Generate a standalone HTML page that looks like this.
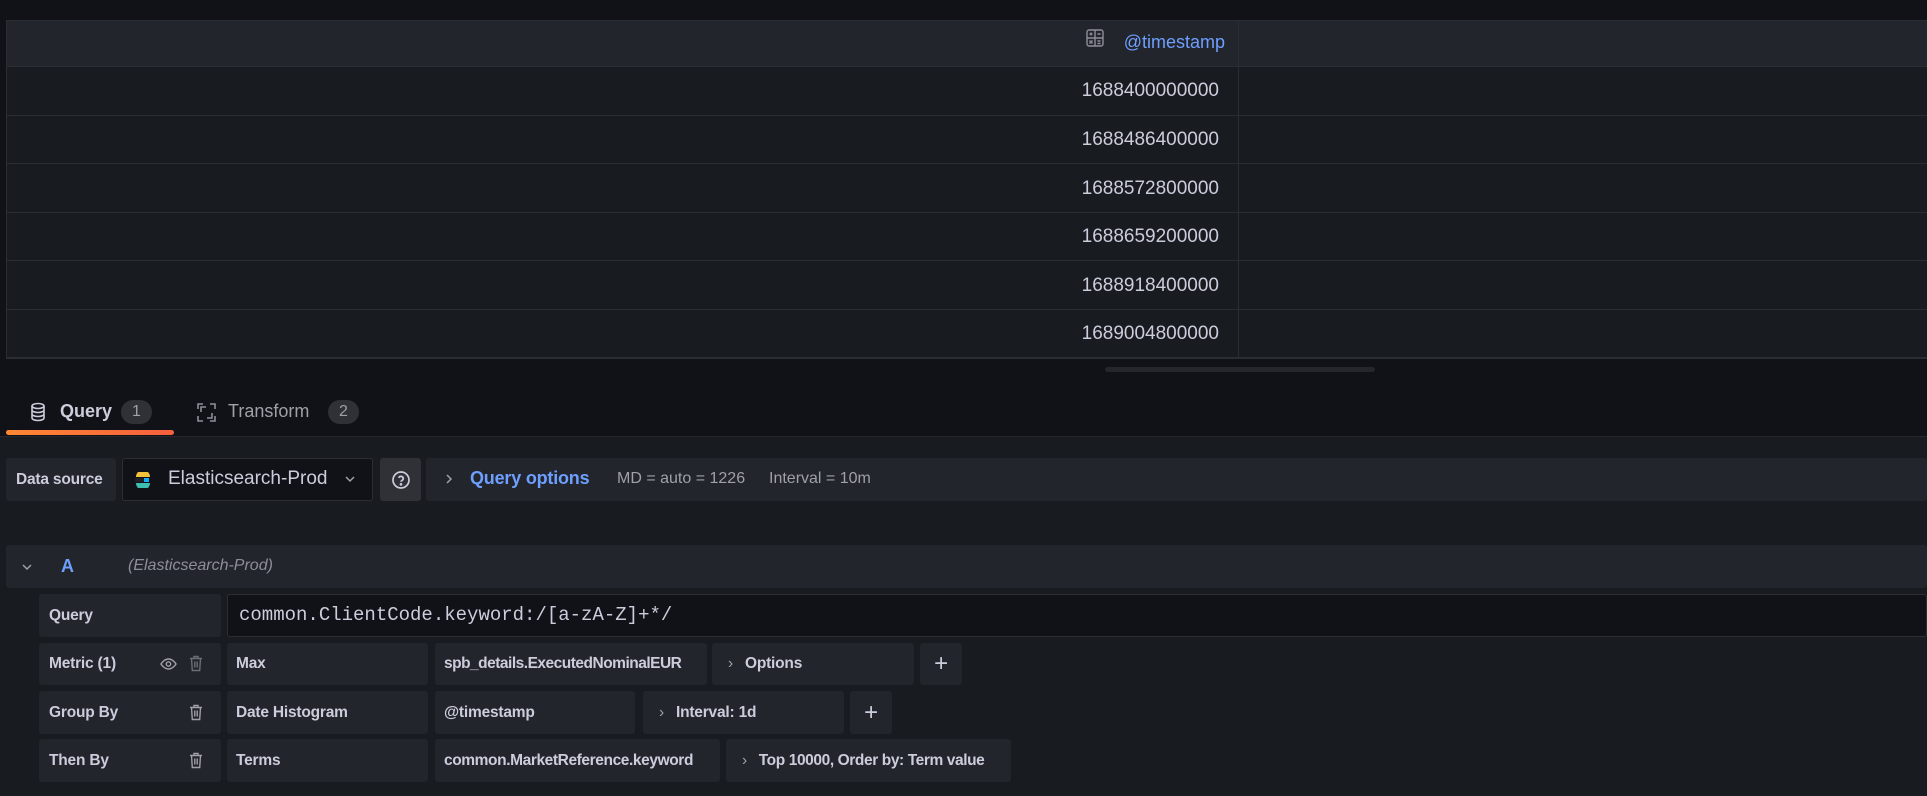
<!DOCTYPE html>
<html><head><meta charset="utf-8"><style>
*{margin:0;padding:0;box-sizing:border-box}
body{width:1927px;height:796px;background:#111217;font-family:"Liberation Sans",sans-serif;color:#ccccdc;position:relative;overflow:hidden}
.a{position:absolute}
.num{position:absolute;right:708px;font-size:19px;color:#ccccdc}
.hl{position:absolute;left:6px;width:1921px;height:1px;background:#2a2d33}
.box{position:absolute;background:#22252b;border-radius:3px;display:flex;align-items:center;padding-left:9px;font-size:15.5px;font-weight:bold;color:#ccccdc;letter-spacing:-0.2px;white-space:nowrap}
.lbl{padding-left:10px}
svg{display:block}
</style></head><body>
<!-- table -->
<div class="a" style="left:6px;top:20px;width:1921px;height:338px;background:#181b1f;border-left:1px solid #2a2d33;border-top:1px solid #2a2d33"></div>
<div class="a" style="left:7px;top:21px;width:1920px;height:45px;background:#22252b"></div>
<div class="a" style="left:1238px;top:21px;width:1px;height:337px;background:#2a2d33"></div>
<div class="a" style="left:1086px;top:29px"><svg width="18" height="18" viewBox="0 0 18 18" fill="none" stroke="#8e8e9a" stroke-width="1.4"><rect x="1" y="1" width="16" height="16" rx="2"/><path d="M9 1v16M1 9h16M3.5 5h3M5 3.5v3M11.5 5h3M3.5 11.5l3 3M6.5 11.5l-3 3M11.5 12h3M11.5 14.5h3"/></svg></div>
<div class="a" style="left:1116px;top:32px;font-size:18px;color:#6e9fff;width:109px;text-align:right;white-space:nowrap">@timestamp</div>
<div class="hl" style="top:66px"></div>
<div class="num" style="top:80px">1688400000000</div>
<div class="hl" style="top:115px"></div>
<div class="num" style="top:129px">1688486400000</div>
<div class="hl" style="top:163px"></div>
<div class="num" style="top:178px">1688572800000</div>
<div class="hl" style="top:212px"></div>
<div class="num" style="top:226px">1688659200000</div>
<div class="hl" style="top:260px"></div>
<div class="num" style="top:275px">1688918400000</div>
<div class="hl" style="top:309px"></div>
<div class="num" style="top:323px">1689004800000</div>
<div class="hl" style="top:357px;height:2px"></div>
<div class="a" style="left:1105px;top:367px;width:270px;height:5px;border-radius:3px;background:#24262c"></div>

<!-- tabs -->
<div class="a" style="left:30px;top:402px"><svg width="16" height="20" viewBox="0 0 16 20" fill="none" stroke="#ccccdc" stroke-width="1.6"><ellipse cx="8" cy="4" rx="6" ry="2.5"/><path d="M2 4v12c0 1.4 2.7 2.5 6 2.5s6-1.1 6-2.5V4M2 8c0 1.4 2.7 2.5 6 2.5s6-1.1 6-2.5M2 12c0 1.4 2.7 2.5 6 2.5s6-1.1 6-2.5"/></svg></div>
<div class="a" style="left:60px;top:401px;font-size:18px;font-weight:bold;color:#ccccdc">Query</div>
<div class="a" style="left:121px;top:400px;width:31px;height:24px;border-radius:12px;background:#2f3137;color:#9fa0a8;font-size:16px;text-align:center;line-height:24px">1</div>
<div class="a" style="left:197px;top:403px"><svg width="19" height="19" viewBox="0 0 19 19" fill="none" stroke="#8e8e9a" stroke-width="1.6"><path d="M1 6V1h5M13 1h5v5M18 13v5h-5M6 18H1v-5M4 9V4h5M15 10v5h-5"/></svg></div>
<div class="a" style="left:228px;top:401px;font-size:18px;color:#9fa0a8">Transform</div>
<div class="a" style="left:328px;top:400px;width:31px;height:24px;border-radius:12px;background:#2f3137;color:#9fa0a8;font-size:16px;text-align:center;line-height:24px">2</div>
<div class="a" style="left:6px;top:430px;width:168px;height:5px;border-radius:3px;background:linear-gradient(90deg,#ff8833,#f55f3e)"></div>
<div class="a" style="left:0;top:436px;width:1927px;height:360px;background:#181b1f;border-top:1px solid #25272d"></div>

<!-- data source row -->
<div class="box" style="left:6px;top:458px;width:110px;height:43px;padding-left:10px">Data source</div>
<div class="a" style="left:122px;top:458px;width:251px;height:43px;background:#111217;border:1px solid #2c2e34;border-radius:3px"></div>
<div class="a" style="left:135px;top:472px"><svg width="16" height="16" viewBox="0 0 16 16"><path d="M1 5a7 7 0 0 1 14 0z" fill="#f3c13a"/><rect x="0" y="6" width="11" height="4" fill="#1e2126"/><rect x="9" y="6" width="5" height="4" fill="#1ba9f5"/><path d="M1 11h14a7 7 0 0 1-14 0z" fill="#3ebeb0"/></svg></div>
<div class="a" style="left:168px;top:468px;font-size:19px;color:#ccccdc">Elasticsearch-Prod</div>
<div class="a" style="left:344px;top:474px"><svg width="12" height="10" viewBox="0 0 12 10" fill="none" stroke="#9fa0a8" stroke-width="1.5"><path d="M2 3l4 4 4-4"/></svg></div>
<div class="a" style="left:380px;top:458px;width:41px;height:43px;background:#2f3137;border-radius:3px"></div>
<div class="a" style="left:391px;top:470px"><svg width="20" height="20" viewBox="0 0 20 20" fill="none" stroke="#ccccdc" stroke-width="1.7"><circle cx="10" cy="10" r="8"/><path d="M7.7 7.8a2.4 2.4 0 0 1 4.6.8c0 1.6-2.3 2-2.3 3.2"/><circle cx="10" cy="14.4" r=".5" fill="#ccccdc"/></svg></div>
<div class="a" style="left:426px;top:458px;width:1501px;height:43px;background:#22252b;border-radius:3px"></div>
<div class="a" style="left:444px;top:473px"><svg width="10" height="12" viewBox="0 0 10 12" fill="none" stroke="#9fa0a8" stroke-width="1.5"><path d="M3 2l4 4-4 4"/></svg></div>
<div class="a" style="left:470px;top:468px;font-size:18px;font-weight:bold;color:#6e9fff;letter-spacing:-0.2px">Query options</div>
<div class="a" style="left:617px;top:470px;font-size:16px;color:#9fa0a8">MD = auto = 1226</div>
<div class="a" style="left:769px;top:470px;font-size:16px;color:#9fa0a8">Interval = 10m</div>

<!-- A row -->
<div class="a" style="left:6px;top:545px;width:1921px;height:43px;background:#22252b;border-radius:3px"></div>
<div class="a" style="left:21px;top:562px"><svg width="12" height="10" viewBox="0 0 12 10" fill="none" stroke="#9fa0a8" stroke-width="1.5"><path d="M2 3l4 4 4-4"/></svg></div>
<div class="a" style="left:61px;top:556px;font-size:18px;font-weight:bold;color:#6e9fff">A</div>
<div class="a" style="left:128px;top:557px;font-size:16px;font-style:italic;color:#8e8e9a">(Elasticsearch-Prod)</div>

<!-- query row -->
<div class="box lbl" style="left:39px;top:594px;width:182px;height:43px">Query</div>
<div class="a" style="left:227px;top:594px;width:1700px;height:43px;background:#111217;border:1px solid #2c2e34;border-radius:3px"></div>
<div class="a" style="left:239px;top:604px;font-family:'Liberation Mono',monospace;font-size:19px;color:#ccccdc">common.ClientCode.keyword:/[a-zA-Z]+*/</div>

<!-- metric row -->
<div class="box lbl" style="left:39px;top:643px;width:182px;height:42px">Metric (1)</div>
<div class="a" style="left:160px;top:657px"><svg width="17" height="14" viewBox="0 0 17 14" fill="none" stroke="#9fa0a8" stroke-width="1.4"><path d="M1 7s3-5 7.5-5S16 7 16 7s-3 5-7.5 5S1 7 1 7z"/><circle cx="8.5" cy="7" r="2.2"/></svg></div>
<div class="a" style="left:189px;top:655px"><svg width="14" height="17" viewBox="0 0 14 17" fill="none" stroke="#6c6e76" stroke-width="1.4"><path d="M1 3.5h12M5 3.5V1.5h4v2M2.5 3.5l.8 12h7.4l.8-12M5.8 6.5v6M8.2 6.5v6"/></svg></div>
<div class="box" style="left:227px;top:643px;width:201px;height:42px">Max</div>
<div class="box" style="left:435px;top:643px;width:272px;height:42px;letter-spacing:-0.5px">spb_details.ExecutedNominalEUR</div>
<div class="box" style="left:712px;top:643px;width:202px;height:42px;padding-left:16px"><span style="font-weight:normal;color:#9fa0a8;margin-right:12px">›</span>Options</div>
<div class="box" style="left:920px;top:643px;width:42px;height:42px;padding:0;justify-content:center;font-size:24px;font-weight:normal">+</div>

<!-- group by row -->
<div class="box lbl" style="left:39px;top:691px;width:182px;height:43px">Group By</div>
<div class="a" style="left:189px;top:704px"><svg width="14" height="17" viewBox="0 0 14 17" fill="none" stroke="#9fa0a8" stroke-width="1.4"><path d="M1 3.5h12M5 3.5V1.5h4v2M2.5 3.5l.8 12h7.4l.8-12M5.8 6.5v6M8.2 6.5v6"/></svg></div>
<div class="box" style="left:227px;top:691px;width:201px;height:43px">Date Histogram</div>
<div class="box" style="left:435px;top:691px;width:200px;height:43px">@timestamp</div>
<div class="box" style="left:643px;top:691px;width:201px;height:43px;padding-left:16px"><span style="font-weight:normal;color:#9fa0a8;margin-right:12px">›</span>Interval: 1d</div>
<div class="box" style="left:850px;top:691px;width:42px;height:43px;padding:0;justify-content:center;font-size:24px;font-weight:normal">+</div>

<!-- then by row -->
<div class="box lbl" style="left:39px;top:739px;width:182px;height:43px">Then By</div>
<div class="a" style="left:189px;top:752px"><svg width="14" height="17" viewBox="0 0 14 17" fill="none" stroke="#9fa0a8" stroke-width="1.4"><path d="M1 3.5h12M5 3.5V1.5h4v2M2.5 3.5l.8 12h7.4l.8-12M5.8 6.5v6M8.2 6.5v6"/></svg></div>
<div class="box" style="left:227px;top:739px;width:201px;height:43px">Terms</div>
<div class="box" style="left:435px;top:739px;width:285px;height:43px;letter-spacing:-0.4px">common.MarketReference.keyword</div>
<div class="box" style="left:726px;top:739px;width:285px;height:43px;padding-left:16px;letter-spacing:-0.4px"><span style="font-weight:normal;color:#9fa0a8;margin-right:12px">›</span>Top 10000, Order by: Term value</div>
</body></html>
